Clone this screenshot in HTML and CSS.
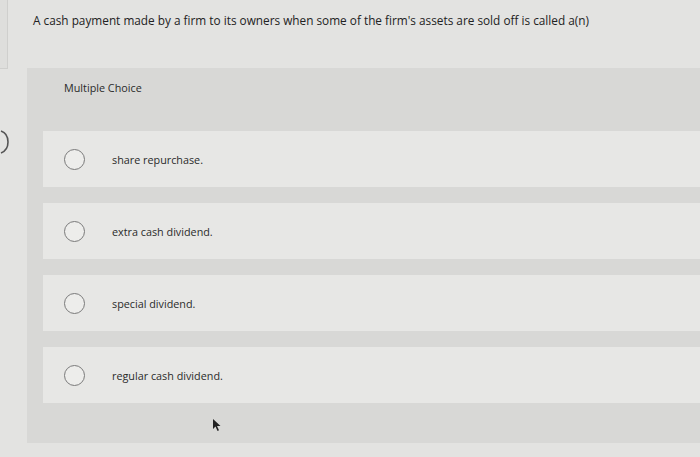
FILE: index.html
```html
<!DOCTYPE html>
<html>
<head>
<meta charset="utf-8">
<link rel="stylesheet" href="styles.css">
</head>
<body>
<div class="page">
  <div class="edge"></div>
  <svg class="bracket" width="10" height="26" viewBox="0 0 10 26"><path d="M1 2 C7 4 8 8 8 13 C8 18 6 22 1 24" fill="none" stroke="#555" stroke-width="1.6"/></svg>
  <p class="question">A cash payment made by a firm to its owners when some of the firm's assets are sold off is called a(n)</p>
  <section class="panel">
    <div class="label">Multiple Choice</div>
    <ul class="choices">
      <li class="choice"><span class="radio"></span><span class="text">share repurchase.</span></li>
      <li class="choice"><span class="radio"></span><span class="text">extra cash dividend.</span></li>
      <li class="choice"><span class="radio"></span><span class="text">special dividend.</span></li>
      <li class="choice"><span class="radio"></span><span class="text">regular cash dividend.</span></li>
    </ul>
  </section>
  <svg class="cursor" width="10" height="14" viewBox="0 0 10 14"><path d="M1 1 L1 11 L3.5 8.5 L5.5 13 L7 12.3 L5 8 L8.5 8 Z" fill="#222"/></svg>
</div>
</body>
</html>
```
FILE: styles.css
```css
html, body {
  margin: 0;
  padding: 0;
}
body {
  background: #e3e3e1;
  font-family: "Open Sans", Lato, sans-serif;
  color: #222;
  width: 700px;
  height: 457px;
  overflow: hidden;
}
.page {
  position: relative;
  height: 457px;
  padding-top: 12px;
  box-sizing: border-box;
}
.edge {
  position: absolute;
  left: 0;
  top: 0;
  width: 7px;
  height: 68px;
  border-right: 1px solid #cfcfcd;
  border-bottom: 1px solid #cfcfcd;
  background: #dededc;
}
.bracket {
  position: absolute;
  left: 0;
  top: 129px;
}
.question {
  margin: 0 0 0 33px;
  font-size: 11.8px;
  line-height: 16px;
}
.panel {
  margin: 40px 0 0 27px;
  background: #d8d8d6;
  padding: 12px 0 40px 0;
}
.label {
  margin-left: 37px;
  font-size: 10.8px;
  line-height: 15px;
  color: #2a2a2a;
}
.choices {
  list-style: none;
  margin: 36px 0 0 16px;
  padding: 0;
  display: flex;
  flex-direction: column;
  gap: 16px;
}
.choice {
  height: 56px;
  background: #e7e7e5;
  display: flex;
  align-items: center;
  padding-left: 21px;
}
.radio {
  width: 19px;
  height: 19px;
  border: 1.4px solid #7a7a7a;
  border-radius: 50%;
  background: #ededeb;
  flex: none;
}
.text {
  margin-left: 27px;
  font-size: 10.8px;
  color: #2a2a2a;
}
.cursor {
  position: absolute;
  left: 212px;
  top: 418px;
}
```
